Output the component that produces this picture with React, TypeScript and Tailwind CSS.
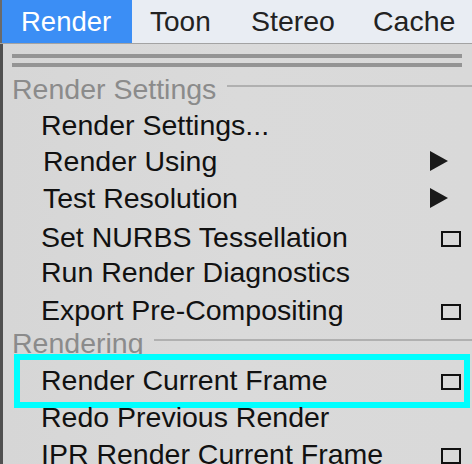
import React from "react";

type Row =
  | { kind: "header"; label: string; h: number; lineX: number }
  | { kind: "item"; label: string; h: number; pad: number; right?: "arrow" | "box"; hl?: boolean };

const rows: Row[] = [
  { kind: "header", label: "Render Settings", h: 36, lineX: 11 },
  { kind: "item", label: "Render Settings...", h: 36, pad: 41 },
  { kind: "item", label: "Render Using", h: 37, pad: 43, right: "arrow" },
  { kind: "item", label: "Test Resolution", h: 39, pad: 43, right: "arrow" },
  { kind: "item", label: "Set NURBS Tessellation", h: 35, pad: 41, right: "box" },
  { kind: "item", label: "Run Render Diagnostics", h: 38, pad: 41 },
  { kind: "item", label: "Export Pre-Compositing", h: 32, pad: 41, right: "box" },
  { kind: "header", label: "Rendering", h: 38, lineX: 10 },
  { kind: "item", label: "Render Current Frame", h: 37, pad: 41, right: "box", hl: true },
  { kind: "item", label: "Redo Previous Render", h: 37, pad: 41 },
  { kind: "item", label: "IPR Render Current Frame", h: 37, pad: 41, right: "box" },
];

function Arrow() {
  return (
    <svg width="18" height="20" viewBox="0 0 18 20" className="block">
      <polygon points="0,0 18,10 0,20" fill="#1a1a1a" />
    </svg>
  );
}

function Box() {
  return <div className="w-[20px] h-[16px] border-2 border-[#111]" />;
}

export default function App() {
  const font = { fontFamily: '"Liberation Sans", Arial, sans-serif' };
  return (
    <div className="w-[472px] h-[464px] overflow-hidden flex flex-col bg-[#d8d8d8]" style={font}>
      {/* menu bar */}
      <div className="h-[44px] flex items-stretch bg-[#e9edf3] border-b border-[#a3a3a3] shrink-0">
        <div className="w-[2px] bg-[#6a6a6a]" />
        <div className="w-[130px] bg-[#3b8ef5] text-white text-[27.5px] leading-[43px] pl-[19px]">Render</div>
        <div className="w-[119px] text-[#222] text-[28px] leading-[43px] pl-[18px]">Toon</div>
        <div className="w-[122px] text-[#222] text-[28.5px] leading-[43px] pl-[0px]">Stereo</div>
        <div className="text-[#222] text-[28.5px] leading-[43px] pl-[0px]">Cache</div>
      </div>
      {/* panel */}
      <div className="flex flex-1 min-h-0">
        <div className="w-[3px] bg-[#505050] shrink-0" />
        <div className="flex-1 flex flex-col bg-gradient-to-r from-[#d6d6d6] via-[#dadada] to-[#d9d9d9]">
          <div className="pt-[10px] pl-[9px] pr-[10px] flex flex-col gap-[5px]">
            <div className="h-[4px] bg-[#949494]" />
            <div className="h-[4px] bg-[#949494]" />
          </div>
          <div className="pt-[4px] flex flex-col">
            {rows.map((r, i) =>
              r.kind === "header" ? (
                <div key={i} className="flex items-center" style={{ height: r.h }}>
                  <span className="pl-[9px] text-[28.5px] leading-[37px] text-[#8b8b8b] whitespace-nowrap">{r.label}</span>
                  <div className="flex-1 h-[2px] bg-[#b0b0b0] mt-[-6px]" style={{ marginLeft: r.lineX }} />
                </div>
              ) : (
                <div key={i} className="relative flex items-start" style={{ height: r.h }}>
                  {r.hl && (
                    <div className="absolute left-[11px] right-[2px] top-[-8px] h-[54px] border-[6px] border-[#00ffff]" />
                  )}
                  <span
                    className="text-[28.5px] leading-[37px] text-[#111] whitespace-nowrap"
                    style={{ paddingLeft: r.pad - 3 }}
                  >
                    {r.label}
                  </span>
                  <div className="flex-1" />
                  {r.right === "arrow" && (
                    <div className="mt-[8px] mr-[24px]">
                      <Arrow />
                    </div>
                  )}
                  {r.right === "box" && (
                    <div className="mt-[12px] mr-[11px]">
                      <Box />
                    </div>
                  )}
                </div>
              )
            )}
          </div>
        </div>
      </div>
    </div>
  );
}
